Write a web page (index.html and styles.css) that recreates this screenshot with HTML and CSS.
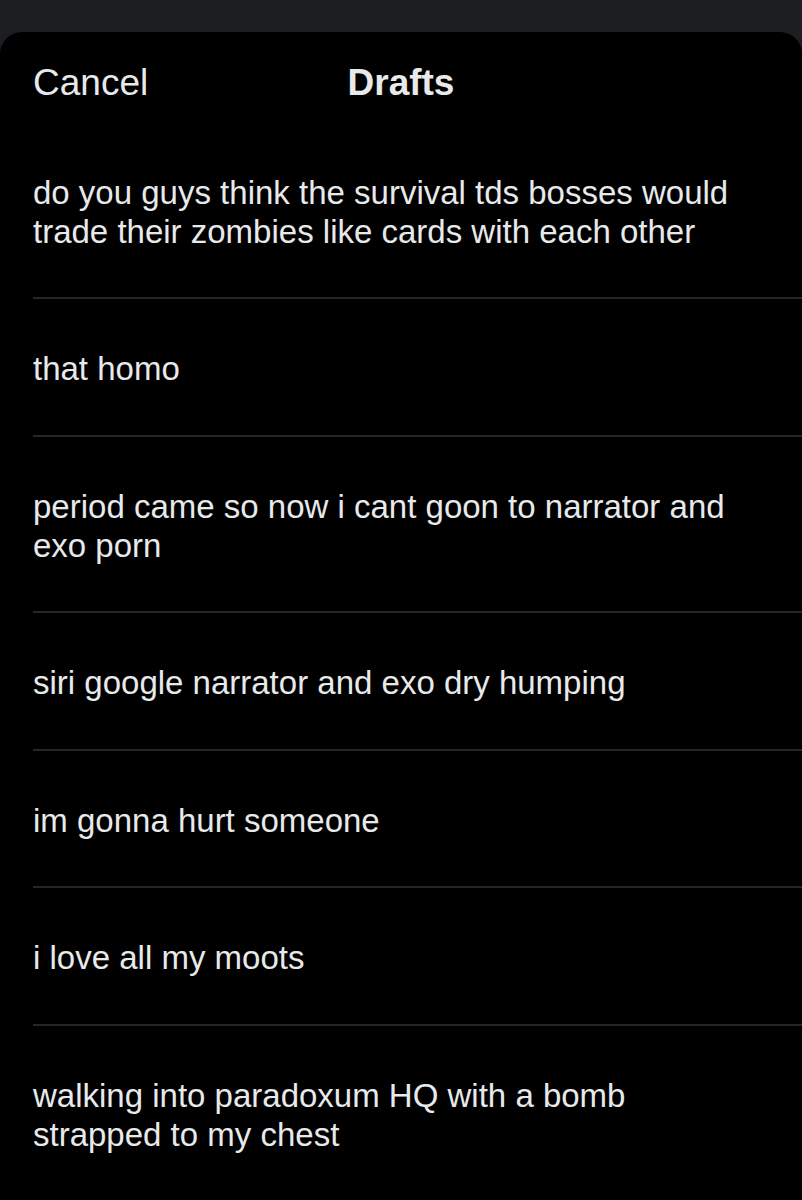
FILE: index.html
```html
<!DOCTYPE html>
<html lang="en">
<head>
<meta charset="utf-8">
<title>Drafts</title>
<link rel="stylesheet" href="styles.css">
</head>
<body>
<div class="sheet">
  <header class="header">
    <span class="cancel">Cancel</span>
    <span class="title">Drafts</span>
    <span class="spacer"></span>
  </header>
  <ul class="drafts">
    <li class="draft">do you guys think the survival tds bosses would trade their zombies like cards with each other</li>
    <li class="draft">that homo</li>
    <li class="draft">period came so now i cant goon to narrator and exo porn</li>
    <li class="draft">siri google narrator and exo dry humping</li>
    <li class="draft">im gonna hurt someone</li>
    <li class="draft">i love all my moots</li>
    <li class="draft">walking into paradoxum HQ with a bomb strapped to my chest</li>
  </ul>
</div>
</body>
</html>
```

FILE: styles.css
```css
html, body {
  margin: 0;
  padding: 0;
  background: #1d1e22;
  height: 100%;
  overflow: hidden;
}
body {
  font-family: "Liberation Sans", Arial, sans-serif;
  color: #e7e9ea;
}
.sheet {
  margin-top: 32px;
  background: #000;
  border-radius: 22px 22px 0 0;
  min-height: 1168px;
}
.header {
  display: grid;
  grid-template-columns: 1fr auto 1fr;
  align-items: center;
  padding: 29px 33px 17.5px;
  font-size: 37px;
  line-height: 44px;
}
.cancel {
  justify-self: start;
}
.title {
  font-weight: bold;
}
.drafts {
  list-style: none;
  margin: 0;
  padding: 0 0 0 33px;
}
.draft {
  padding: 50px 60px 46.5px 0;
  font-size: 33px;
  line-height: 39px;
  border-bottom: 2px solid #242628;
}
```
